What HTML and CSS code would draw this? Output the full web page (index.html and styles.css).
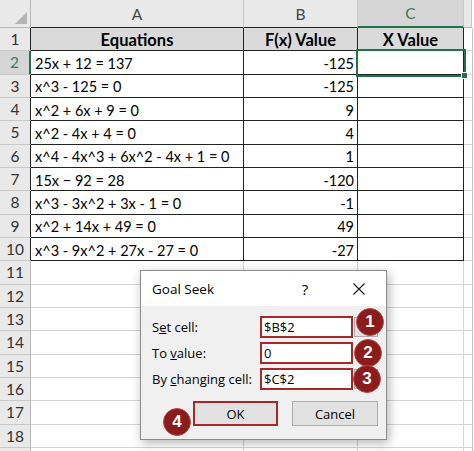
FILE: index.html
```html
<!DOCTYPE html>
<html lang="en">
<head>
    <meta charset="UTF-8">
    <meta name="viewport" content="width=device-width, initial-scale=1.0">
    <title>Goal Seek</title>
    <link rel="stylesheet" href="styles.css">
</head>
<body>
    <div class="sheet">
        <!-- Column headers -->
        <div class="corner"><span class="tri"></span></div>
        <div class="colhead dark">A</div>
        <div class="colhead dark">B</div>
        <div class="colhead sel">C</div>
        <div class="colhead"></div>

        <div class="rowhead in">1</div>
        <div class="cell t head">Equations</div>
        <div class="cell t head">F(x) Value</div>
        <div class="cell t head">X Value</div>
        <div class="cell"></div>

        <div class="rowhead in sel">2</div>
        <div class="cell t">25x + 12 = 137</div>
        <div class="cell t num">-125</div>
        <div class="cell t active"></div>
        <div class="cell"></div>

        <div class="rowhead in">3</div>
        <div class="cell t">x^3 - 125 = 0</div>
        <div class="cell t num">-125</div>
        <div class="cell t"></div>
        <div class="cell"></div>

        <div class="rowhead in">4</div>
        <div class="cell t">x^2 + 6x + 9 = 0</div>
        <div class="cell t num">9</div>
        <div class="cell t"></div>
        <div class="cell"></div>

        <div class="rowhead in">5</div>
        <div class="cell t">x^2 - 4x + 4 = 0</div>
        <div class="cell t num">4</div>
        <div class="cell t"></div>
        <div class="cell"></div>

        <div class="rowhead in">6</div>
        <div class="cell t">x^4 - 4x^3 + 6x^2 - 4x + 1 = 0</div>
        <div class="cell t num">1</div>
        <div class="cell t"></div>
        <div class="cell"></div>

        <div class="rowhead in">7</div>
        <div class="cell t">15x − 92 = 28</div>
        <div class="cell t num">-120</div>
        <div class="cell t"></div>
        <div class="cell"></div>

        <div class="rowhead in">8</div>
        <div class="cell t">x^3 - 3x^2 + 3x - 1 = 0</div>
        <div class="cell t num">-1</div>
        <div class="cell t"></div>
        <div class="cell"></div>

        <div class="rowhead in">9</div>
        <div class="cell t">x^2 + 14x + 49 = 0</div>
        <div class="cell t num">49</div>
        <div class="cell t"></div>
        <div class="cell"></div>

        <div class="rowhead in">10</div>
        <div class="cell t">x^3 - 9x^2 + 27x - 27 = 0</div>
        <div class="cell t num">-27</div>
        <div class="cell t"></div>
        <div class="cell"></div>

        <div class="rowhead">11</div>
        <div class="cell"></div><div class="cell"></div><div class="cell"></div><div class="cell"></div>
        <div class="rowhead">12</div>
        <div class="cell"></div><div class="cell"></div><div class="cell"></div><div class="cell"></div>
        <div class="rowhead">13</div>
        <div class="cell"></div><div class="cell"></div><div class="cell"></div><div class="cell"></div>
        <div class="rowhead">14</div>
        <div class="cell"></div><div class="cell"></div><div class="cell"></div><div class="cell"></div>
        <div class="rowhead">15</div>
        <div class="cell"></div><div class="cell"></div><div class="cell"></div><div class="cell"></div>
        <div class="rowhead">16</div>
        <div class="cell"></div><div class="cell"></div><div class="cell"></div><div class="cell"></div>
        <div class="rowhead">17</div>
        <div class="cell"></div><div class="cell"></div><div class="cell"></div><div class="cell"></div>
        <div class="rowhead">18</div>
        <div class="cell"></div><div class="cell"></div><div class="cell"></div><div class="cell"></div>
        <div class="rowhead"></div>
        <div class="cell"></div><div class="cell"></div><div class="cell"></div><div class="cell"></div>

        <!-- Goal Seek dialog -->
        <div class="dialog">
            <div class="dialog-title">
                <span class="title-text">Goal Seek</span>
                <span class="help">?</span>
                <span class="close">
                    <svg width="12" height="12" viewBox="0 0 12 12">
                        <path d="M0.5 0.5 L11.5 11.5 M11.5 0.5 L0.5 11.5" stroke="#1a1a1a" stroke-width="1.1" fill="none"/>
                    </svg>
                </span>
            </div>
            <div class="dialog-body">
                <div class="field">
                    <label>S<u>e</u>t cell:</label>
                    <div class="box">$B$2</div>
                    <div class="refbtn"></div>
                </div>
                <div class="field">
                    <label>To <u>v</u>alue:</label>
                    <div class="box">0</div>
                </div>
                <div class="field">
                    <label>By <u>c</u>hanging cell:</label>
                    <div class="box">$C$2</div>
                    <div class="refbtn"></div>
                </div>
                <div class="buttons">
                    <div class="btn ok">OK</div>
                    <div class="btn">Cancel</div>
                </div>
            </div>

            <!-- numbered callouts -->
            <div class="badge b1">1</div>
            <div class="badge b2">2</div>
            <div class="badge b3">3</div>
            <div class="badge b4">4</div>
        </div>
    </div>
</body>
</html>
```

FILE: styles.css
```css
body {
    margin: 0;
    padding: 0;
    width: 474px;
    height: 451px;
    overflow: hidden;
    background: #fff;
}

/* Spreadsheet grid */
.sheet {
    position: relative;
    display: grid;
    grid-template-columns: 31px 213px 114px 106px 8px;
    grid-template-rows: 28px repeat(19, 23.333px);
    font-family: 'Lato', sans-serif;
    font-size: 14.5px;
    color: #000;
}

.corner,
.colhead,
.rowhead,
.cell {
    box-sizing: border-box;
    border-right: 1px solid #d4d4d4;
    border-bottom: 1px solid #d4d4d4;
}

.corner {
    position: relative;
    background: #e9e9e9;
    border-right-color: #b8b8b8;
    border-bottom-color: #b8b8b8;
}

.corner .tri {
    position: absolute;
    right: 3px;
    bottom: 3px;
    width: 0;
    height: 0;
    border-left: 12px solid transparent;
    border-bottom: 12px solid #b4b4b4;
}

.colhead {
    background: #e9e9e9;
    color: #444;
    font-size: 15.5px;
    display: flex;
    align-items: center;
    justify-content: center;
    border-right-color: #c8c8c8;
    border-bottom-color: #b8b8b8;
}

.colhead.dark {
    border-bottom-color: #222;
}

.colhead.sel {
    background: #d6d6d6;
    color: #3d7a57;
    border-bottom: 2px solid #217346;
}

.rowhead {
    background: #e9e9e9;
    color: #333;
    font-size: 15.5px;
    display: flex;
    align-items: center;
    justify-content: center;
    border-right-color: #b8b8b8;
    border-bottom-color: #c8c8c8;
}

.rowhead.in {
    border-right-color: #222;
}

.rowhead.sel {
    background: #d6d6d6;
    color: #3d7a57;
    border-right: 2px solid #217346;
}

.cell {
    display: flex;
    align-items: center;
    padding: 2px 4px 0;
    white-space: nowrap;
    overflow: hidden;
}

.cell:nth-child(5n) {
    border-right-color: #c6c6c6;
}

.cell.t {
    border-right-color: #222;
    border-bottom-color: #222;
}

.cell.head {
    background: #dadada;
    font-weight: bold;
    font-size: 16.5px;
    justify-content: center;
}

.cell.num {
    justify-content: flex-end;
    padding-right: 3px;
}

.cell.active {
    position: relative;
    z-index: 1;
    overflow: visible;
    outline: 2px solid #217346;
    outline-offset: 0;
}

.cell.active::after {
    content: '';
    position: absolute;
    right: -5px;
    bottom: -5px;
    width: 5px;
    height: 5px;
    background: #217346;
    border: 1px solid #fff;
}

/* Goal Seek dialog */
.dialog {
    position: absolute;
    left: 140px;
    top: 270px;
    z-index: 2;
    width: 247px;
    height: 170px;
    box-sizing: border-box;
    border: 1px solid #8c8c8c;
    background: #f0f0f0;
    box-shadow: 2px 3px 10px rgba(0, 0, 0, 0.3);
    font-family: 'Open Sans', sans-serif;
    font-size: 13px;
    color: #000;
}

.dialog-title {
    height: 35px;
    background: #fff;
    display: flex;
    align-items: center;
    padding-left: 11px;
}

.title-text {
    flex: 1;
    font-size: 13.5px;
}

.help {
    width: 26px;
    text-align: center;
    font-size: 15px;
    margin-right: 21px;
}

.close {
    width: 40px;
    display: flex;
    justify-content: center;
    margin-right: 7px;
}

.dialog-body {
    padding-top: 10px;
}

.field {
    display: flex;
    align-items: center;
    height: 22px;
    padding-left: 11px;
    margin-bottom: 4px;
}

.field label {
    width: 108px;
}

.box {
    box-sizing: border-box;
    width: 93px;
    height: 22px;
    border: 2px solid #a8272b;
    background: #fff;
    padding-left: 2px;
    line-height: 18px;
}

.refbtn {
    box-sizing: border-box;
    width: 24px;
    height: 20px;
    margin-left: 1px;
    background: #e1e1e1;
    border: 1px solid #adadad;
}

.buttons {
    display: flex;
    gap: 14px;
    padding-left: 52px;
    margin-top: 11px;
}

.btn {
    box-sizing: border-box;
    width: 86px;
    height: 25px;
    background: #e1e1e1;
    border: 1px solid #adadad;
    display: flex;
    align-items: center;
    justify-content: center;
}

.btn.ok {
    width: 85px;
    border: 2px solid #a8272b;
}

.badge {
    position: absolute;
    box-sizing: border-box;
    width: 28px;
    height: 28px;
    border-radius: 50%;
    background: #8b1c1c;
    border: 1px solid #b34848;
    color: #fff;
    font-family: 'Liberation Sans', sans-serif;
    font-weight: bold;
    font-size: 17px;
    display: flex;
    align-items: center;
    justify-content: center;
}

.b1 { left: 215px; top: 37px; }
.b2 { left: 213px; top: 68px; }
.b3 { left: 212px; top: 94px; }
.b4 { left: 22px; top: 137px; }
```
